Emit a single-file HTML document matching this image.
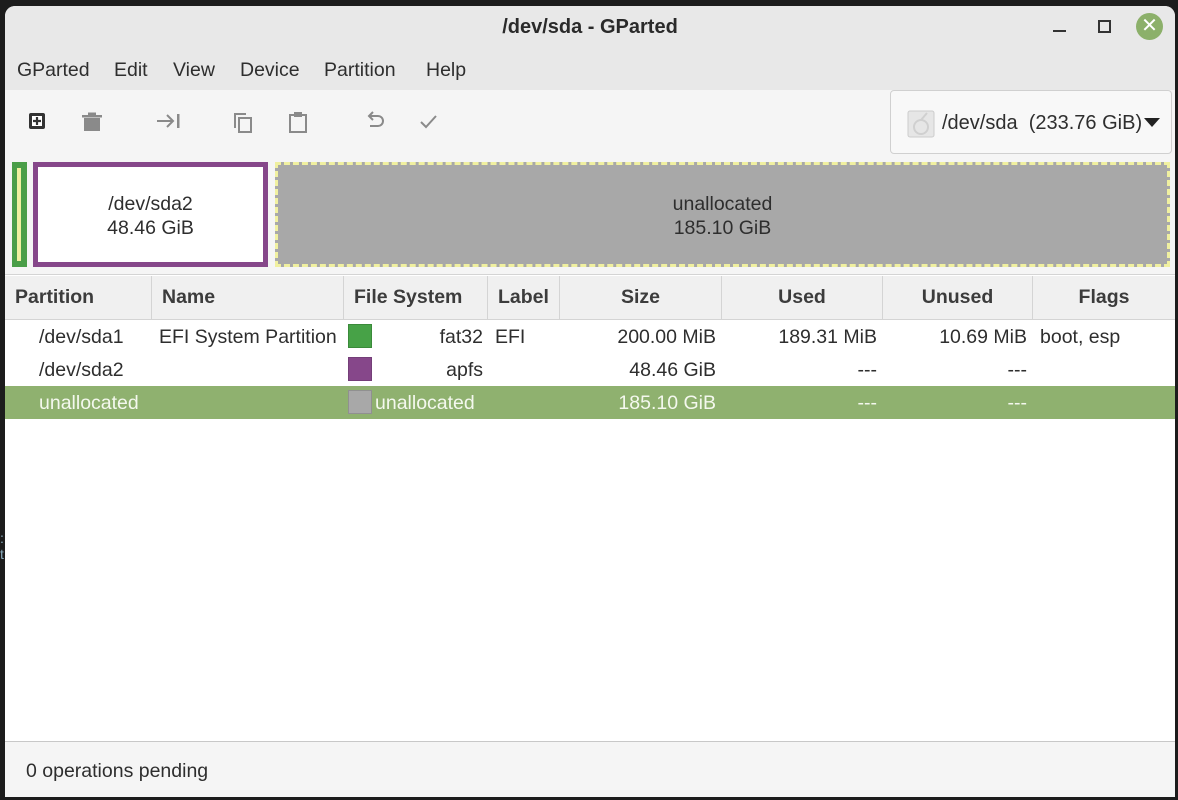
<!DOCTYPE html>
<html><head><meta charset="utf-8"><style>
*{margin:0;padding:0;box-sizing:border-box}
body{width:1178px;height:800px;background:#1c1c1c;position:relative;overflow:hidden;font-family:"Liberation Sans",sans-serif;color:#2e2e2e;font-size:19.5px}
.a{position:absolute}
#win{position:absolute;left:5px;top:6px;width:1170px;height:791px;background:#f5f5f5;border-radius:10px 10px 0 0;overflow:hidden}
.t{position:absolute;white-space:nowrap}
.hd{position:absolute;top:270px;height:43px;border-right:1px solid #d4d4d4;font-weight:bold;color:#3c3c3c;line-height:42px;padding:0 10px;background:#f0f0f0}
.r{text-align:right}
</style></head><body>
<div class="a" style="left:0;top:530px;width:5px;height:60px;color:#8ab;font-size:14px">:<br>t</div>
<div id="win">
 <div class="a" style="left:0;top:0;width:1170px;height:84px;background:#e8e8e8"></div>
 <div class="t" style="left:0;width:1170px;text-align:center;top:10px;font-size:20px;font-weight:bold;color:#2a2a2a">/dev/sda - GParted</div>
 <div class="a" style="left:1048px;top:24px;width:13px;height:2px;background:#333"></div>
 <div class="a" style="left:1093px;top:14px;width:13px;height:13px;border:2px solid #333"></div>
 <div class="a" style="left:1131px;top:7px;width:27px;height:27px;border-radius:50%;background:#8cb06a;color:#fff;text-align:center;line-height:27px;font-size:20px">✕</div>
 <div class="t" style="left:12px;top:53px">GParted</div>
 <div class="t" style="left:109px;top:53px">Edit</div>
 <div class="t" style="left:168px;top:53px">View</div>
 <div class="t" style="left:235px;top:53px">Device</div>
 <div class="t" style="left:319px;top:53px">Partition</div>
 <div class="t" style="left:421px;top:53px">Help</div>
 <svg class="a" style="left:18px;top:103px" width="440" height="30" viewBox="0 0 440 30">
  <rect x="6" y="4" width="16" height="16" rx="2" fill="#333"/><rect x="9" y="7" width="10" height="10" fill="#fff"/><path d="M14 8v8M10 12h8" stroke="#333" stroke-width="2.2"/>
  <g fill="#8a8a8a"><rect x="59" y="6" width="20" height="2.5"/><rect x="65" y="3.5" width="8" height="3"/><rect x="61" y="9" width="16" height="13"/></g>
  <path d="M134 12h16M144 6l6 6-6 6" stroke="#8a8a8a" stroke-width="2" fill="none"/><rect x="154" y="5" width="2.5" height="14" fill="#8a8a8a"/>
  <path d="M212 19V5h11" stroke="#8a8a8a" stroke-width="2" fill="none"/><rect x="216" y="9" width="12" height="14" stroke="#8a8a8a" stroke-width="2" fill="none"/>
  <rect x="267" y="6" width="16" height="17" stroke="#8a8a8a" stroke-width="2" fill="none"/><rect x="271" y="3" width="8" height="5" fill="#8a8a8a"/>
  <path d="M346 7h9a5 5 0 0 1 0 10h-8M350 3l-4 4 4 4" stroke="#8a8a8a" stroke-width="2" fill="none"/>
  <path d="M398 13l5 5 10-11" stroke="#8a8a8a" stroke-width="2" fill="none"/>
 </svg>
 <div class="a" style="left:885px;top:84px;width:282px;height:64px;border:1px solid #d0d0d0;border-radius:4px;background:#f8f8f8"></div>
 <svg class="a" style="left:902px;top:104px" width="28" height="28"><rect x="1" y="1" width="26" height="26" rx="2" fill="#e6e6e6" stroke="#ccc"/><circle cx="14" cy="17" r="7" fill="none" stroke="#d0d0d0" stroke-width="2"/><path d="M14 10l6-7" stroke="#d0d0d0" stroke-width="2"/></svg>
 <div class="t" style="left:937px;top:106px;font-size:20px">/dev/sda&nbsp; (233.76 GiB)</div>
 <div class="a" style="left:1139px;top:112px;width:0;height:0;border-left:8px solid transparent;border-right:8px solid transparent;border-top:9px solid #222"></div>
 <div class="a" style="left:7px;top:156px;width:15px;height:105px;background:#4a9e48"></div>
 <div class="a" style="left:12px;top:162px;width:4px;height:93px;background:#f0f0a0"></div>
 <div class="a" style="left:28px;top:156px;width:235px;height:105px;border:5px solid #86478a;background:#fff"></div>
 <div class="t" style="left:28px;width:235px;text-align:center;top:186px;line-height:24px">/dev/sda2<br>48.46 GiB</div>
 <div class="a" style="left:270px;top:156px;width:895px;height:105px;background:#a8a8a8;border:3px dashed #f0f0a0"></div>
 <div class="t" style="left:270px;width:895px;text-align:center;top:186px;line-height:24px">unallocated<br>185.10 GiB</div>
 <div class="a" style="left:0;top:268px;width:1170px;height:468px;background:#fff;border-top:1px solid #d4d4d4;border-bottom:1px solid #c8c8c8"></div>
 <div class="hd" style="left:0;width:147px">Partition</div>
 <div class="hd" style="left:147px;width:192px">Name</div>
 <div class="hd" style="left:339px;width:144px">File System</div>
 <div class="hd" style="left:483px;width:72px">Label</div>
 <div class="hd" style="left:555px;width:162px;text-align:center">Size</div>
 <div class="hd" style="left:717px;width:161px;text-align:center">Used</div>
 <div class="hd" style="left:878px;width:150px;text-align:center">Unused</div>
 <div class="hd" style="left:1028px;width:142px;text-align:center;border-right:0">Flags</div>
 <div class="a" style="left:0;top:313px;width:1170px;height:1px;background:#d4d4d4"></div>
 <div class="a" style="left:0;top:380px;width:1170px;height:33px;background:#8fb16f"></div>
 <div class="t" style="left:34px;top:320px">/dev/sda1</div>
 <div class="t" style="left:154px;top:320px">EFI System Partition</div>
 <div class="a" style="left:343px;top:318px;width:24px;height:24px;background:#47a247;border:1px solid #3a8a3a"></div>
 <div class="t r" style="left:370px;width:108px;top:320px">fat32</div>
 <div class="t" style="left:490px;top:320px">EFI</div>
 <div class="t r" style="left:555px;width:156px;top:320px">200.00 MiB</div>
 <div class="t r" style="left:717px;width:155px;top:320px">189.31 MiB</div>
 <div class="t r" style="left:878px;width:144px;top:320px">10.69 MiB</div>
 <div class="t" style="left:1035px;top:320px">boot, esp</div>
 <div class="t" style="left:34px;top:353px">/dev/sda2</div>
 <div class="a" style="left:343px;top:351px;width:24px;height:24px;background:#86478a;border:1px solid #743e78"></div>
 <div class="t r" style="left:370px;width:108px;top:353px">apfs</div>
 <div class="t r" style="left:555px;width:156px;top:353px">48.46 GiB</div>
 <div class="t r" style="left:717px;width:155px;top:353px">---</div>
 <div class="t r" style="left:878px;width:144px;top:353px">---</div>
 <div style="color:#f4f8ee">
 <div class="t" style="left:34px;top:386px">unallocated</div>
 <div class="a" style="left:343px;top:384px;width:24px;height:24px;background:#a8a8a8;border:1px solid #909090"></div>
 <div class="t" style="left:370px;top:386px">unallocated</div>
 <div class="t r" style="left:555px;width:156px;top:386px">185.10 GiB</div>
 <div class="t r" style="left:717px;width:155px;top:386px">---</div>
 <div class="t r" style="left:878px;width:144px;top:386px">---</div>
 </div>
 <div class="t" style="left:21px;top:754px">0 operations pending</div>
</div>
</body></html>
